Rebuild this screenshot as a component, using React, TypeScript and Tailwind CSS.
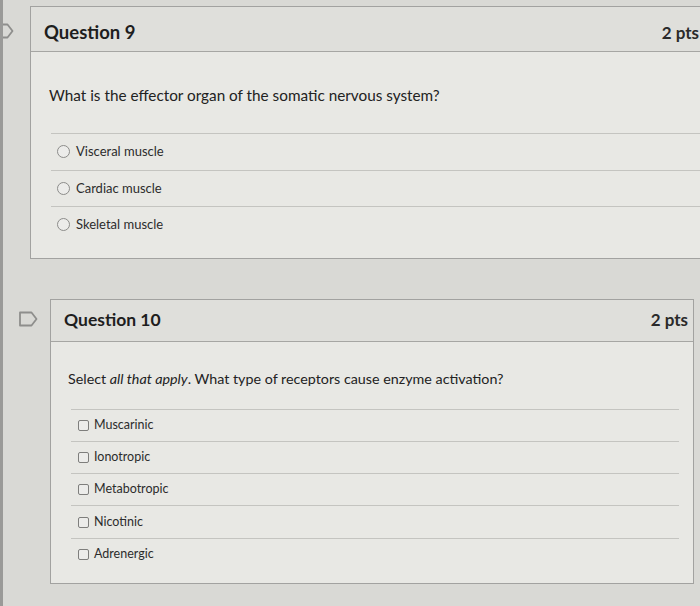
import React from 'react';

const FONT = "font-['Lato','Liberation_Sans',sans-serif]";

function Flag({ className }: { className?: string }) {
  return (
    <svg className={className} width="21" height="18" viewBox="0 0 21 18" fill="none">
      <path
        d="M2 2.5 H13.5 L18.5 9 L13.5 15.5 H2 Z"
        stroke="#8e8e8c"
        strokeWidth="1.8"
        strokeLinejoin="round"
      />
    </svg>
  );
}

function Radio() {
  return <span className="h-[13px] w-[13px] shrink-0 rounded-full border border-[#8c8c8a] bg-[#ececea]" />;
}

function Check() {
  return <span className="h-[11px] w-[11px] shrink-0 rounded-[2px] border border-[#7e7e7c] bg-[#ececea]" />;
}

const Q9_OPTIONS = ['Visceral muscle', 'Cardiac muscle', 'Skeletal muscle'];
const Q10_OPTIONS = ['Muscarinic', 'Ionotropic', 'Metabotropic', 'Nicotinic', 'Adrenergic'];

export default function App() {
  return (
    <div className={`h-[606px] w-[700px] overflow-hidden border-l-[3px] border-[#9a9a98] bg-[#d9d9d5] ${FONT}`}>
      {/* Question 9 */}
      <div className="flex items-start pt-[6px]">
        <div className="w-[27px] shrink-0 pt-[16px]">
          <Flag className="-ml-[9px]" />
        </div>
        <div className="w-[692px] shrink-0 border border-[#a2a2a0] bg-[#e8e8e4]">
          <div className="flex h-[45px] items-center justify-between border-b border-[#a6a6a3] bg-[#dfdfdb] pl-[13px] pr-[22px] pt-[7px]">
            <span className="text-[18.5px] font-bold text-[#1e1e1e]">Question 9</span>
            <span className="text-[17px] font-bold text-[#2a2a2a]">2 pts</span>
          </div>
          <div className="pb-[15px] pl-[18px] pt-[31px]">
            <p className="text-[15.3px] leading-[24px] text-[#222]">
              What is the effector organ of the somatic nervous system?
            </p>
            <div className="ml-[2px] mt-[26px]">
              {Q9_OPTIONS.map((o) => (
                <div key={o} className="flex h-[36.5px] items-center gap-[6px] border-t border-[#c4c4c0] pl-[6px]">
                  <Radio />
                  <span className="text-[13px] text-[#2c2c2c]">{o}</span>
                </div>
              ))}
            </div>
          </div>
        </div>
      </div>

      {/* Question 10 */}
      <div className="flex items-start pt-[40px]">
        <div className="w-[47px] shrink-0 pl-[15px] pt-[11px]">
          <Flag />
        </div>
        <div className="w-[644px] shrink-0 border border-[#a2a2a0] bg-[#e8e8e4]">
          <div className="flex h-[42px] items-center justify-between border-b border-[#a6a6a3] bg-[#dfdfdb] pl-[13px] pr-[5px]">
            <span className="text-[17.5px] font-bold text-[#1e1e1e]">Question 10</span>
            <span className="text-[17px] font-bold text-[#2a2a2a]">2 pts</span>
          </div>
          <div className="pb-[13px] pl-[17px] pr-[14px] pt-[26px]">
            <p className="text-[14.3px] leading-[22px] text-[#222]">
              Select <em>all that apply</em>. What type of receptors cause enzyme activation?
            </p>
            <div className="ml-[3px] mt-[19px]">
              {Q10_OPTIONS.map((o) => (
                <div key={o} className="flex h-[32.3px] items-center gap-[5px] border-t border-[#c4c4c0] pl-[7px]">
                  <Check />
                  <span className="text-[12.5px] text-[#2c2c2c]">{o}</span>
                </div>
              ))}
            </div>
          </div>
        </div>
      </div>
    </div>
  );
}
